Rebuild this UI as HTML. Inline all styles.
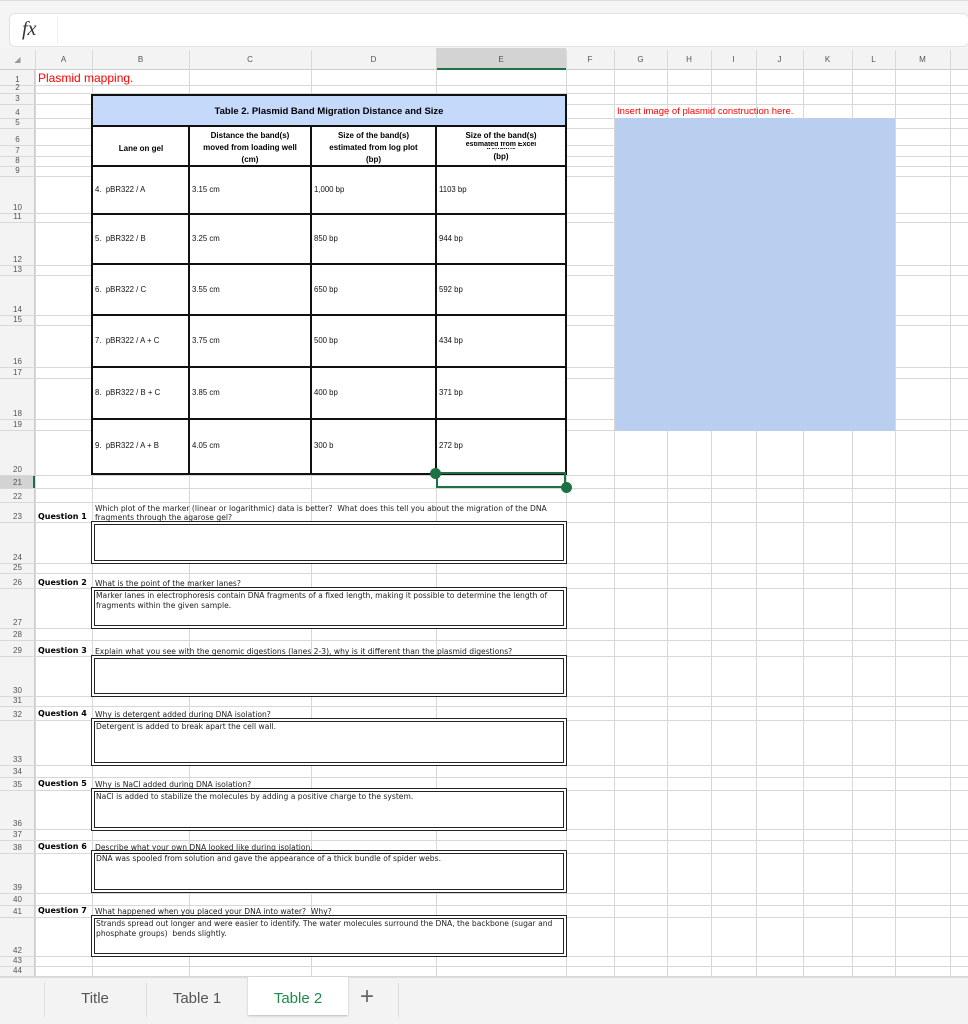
<!DOCTYPE html>
<html><head><meta charset="utf-8"><style>
*{margin:0;padding:0;box-sizing:border-box}
body{width:968px;height:1024px;overflow:hidden;background:#fff;font-family:"Liberation Sans",sans-serif;position:relative}
.a{position:absolute}
.hl{position:absolute;height:1px;background:#d8d8d8}
.vl{position:absolute;width:1px;background:#d8d8d8}
.ch{position:absolute;top:50px;height:20px;font-size:8px;color:#555;text-align:center;line-height:20px}
.rn{position:absolute;left:0;width:35px;font-size:8px;color:#555;text-align:center}
.t{position:absolute;font-size:8px;color:#111;white-space:nowrap}
.q{position:absolute;left:38px;font-size:8px;font-weight:bold;font-family:"DejaVu Sans",sans-serif}
.qt{position:absolute;left:95px;font-size:7.6px;font-family:"DejaVu Sans",sans-serif;color:#222;white-space:nowrap}
.box{position:absolute;left:91px;width:476px;border:4px double #222;background:#fff;font-size:7.6px;font-family:"DejaVu Sans",sans-serif;color:#222;padding:0 1px;line-height:10px}
.th{position:absolute;font-size:8px;font-weight:bold;text-align:center;line-height:12px}
</style></head><body>
<div class="a" style="left:0;top:0;width:968px;height:48px;background:#f5f5f5;border-top:1px solid #ddd"></div>
<div class="a" style="left:9px;top:13px;width:960px;height:34px;background:#fff;border:1px solid #e2e2e2;border-radius:6px"></div>
<div class="a" style="left:22px;top:18px;font-family:'Liberation Serif',serif;font-style:italic;font-size:20px;color:#333">fx</div>
<div class="a" style="left:57px;top:16px;width:1px;height:28px;background:#eee"></div>
<div class="a" style="left:0;top:48px;width:968px;height:22px;background:#f3f3f3;border-bottom:1px solid #ccc"></div>
<div class="a" style="left:436px;top:48px;width:130px;height:22px;background:#d3d3d3;border-bottom:2px solid #1e7145"></div>
<div class="a" style="left:0;top:70px;width:35px;height:906px;background:#f3f3f3;border-right:1px solid #ccc"></div>
<div class="a" style="left:0;top:475px;width:35px;height:13px;background:#d3d3d3;border-right:2px solid #1e7145"></div>
<div id="g"></div>
<div class="a" style="left:38px;top:71px;font-size:12px;color:#f00">Plasmid mapping.</div>
<div class="a" style="left:617px;top:106px;font-size:9.5px;color:#f00">Insert image of plasmid construction here.</div>
<div class="a" style="left:615px;top:118px;width:280px;height:313px;background:#bacff0"></div>
<!-- table -->
<div class="a" style="left:91px;top:94px;width:476px;height:381px;border:2px solid #111;background:#fff"></div>
<div class="a" style="left:93px;top:96px;width:472px;height:31px;background:#c5d9fb;border-bottom:2px solid #111;font-size:9.5px;font-weight:bold;text-align:center;line-height:31px">Table 2. Plasmid Band Migration Distance and Size</div>
<div id="tb"></div>
<div class="th" style="left:93px;top:143px;width:96px">Lane on gel</div>
<div class="th" style="left:189px;top:130px;width:122px">Distance the band(s)<br>moved from loading well<br>(cm)</div>
<div class="th" style="left:311px;top:130px;width:125px">Size of the band(s)<br>estimated from log plot<br>(bp)</div>
<div class="th" style="left:436px;top:130px;width:130px;height:36px;overflow:hidden">Size of the band(s)<br><span style="font-size:7px;line-height:6px;display:block;height:6px;overflow:hidden">estimated from Excel</span><span style="font-size:7px;display:block;height:3px;overflow:hidden;line-height:0">trendline</span>(bp)</div>
<div class="a" style="left:436px;top:472px;width:130px;height:16px;border:2px solid #1e7145;border-top-width:2px"></div>
<div class="a" style="left:430px;top:468px;width:11px;height:11px;border-radius:50%;background:#1e7145"></div>
<div class="a" style="left:561px;top:482px;width:11px;height:11px;border-radius:50%;background:#1e7145"></div>
<!-- questions -->
<div class="q" style="top:512px">Question 1</div>
<div class="qt" style="top:504px;line-height:9px">Which plot of the marker (linear or logarithmic) data is better?&nbsp; What does this tell you about the migration of the DNA<br>fragments through the agarose gel?</div>
<div class="box" style="top:521px;height:43px"></div>
<div class="q" style="top:578px">Question 2</div>
<div class="qt" style="top:579px">What is the point of the marker lanes?</div>
<div class="box" style="top:587px;height:42px">Marker lanes in electrophoresis contain DNA fragments of a fixed length, making it possible to determine the length of<br>fragments within the given sample.</div>
<div class="q" style="top:646px">Question 3</div>
<div class="qt" style="top:647px">Explain what you see with the genomic digestions (lanes 2-3), why is it different than the plasmid digestions?</div>
<div class="box" style="top:655px;height:42px"></div>
<div class="q" style="top:709px">Question 4</div>
<div class="qt" style="top:710px">Why is detergent added during DNA isolation?</div>
<div class="box" style="top:718px;height:48px">Detergent is added to break apart the cell wall.</div>
<div class="q" style="top:779px">Question 5</div>
<div class="qt" style="top:780px">Why is NaCl added during DNA isolation?</div>
<div class="box" style="top:788px;height:43px">NaCl is added to stabilize the molecules by adding a positive charge to the system.</div>
<div class="q" style="top:842px">Question 6</div>
<div class="qt" style="top:843px">Describe what your own DNA looked like during isolation.</div>
<div class="box" style="top:850px;height:43px">DNA was spooled from solution and gave the appearance of a thick bundle of spider webs.</div>
<div class="q" style="top:906px">Question 7</div>
<div class="qt" style="top:907px">What happened when you placed your DNA into water?&nbsp; Why?</div>
<div class="box" style="top:915px;height:42px">Strands spread out longer and were easier to identify. The water molecules surround the DNA, the backbone (sugar and<br>phosphate groups)&nbsp; bends slightly.</div>
<!-- tabs -->
<div class="a" style="left:0;top:977px;width:968px;height:47px;background:#f3f3f3;border-top:1px solid #ddd"></div>
<div class="a" style="left:44px;top:983px;width:1px;height:34px;background:#ddd"></div>
<div class="a" style="left:146px;top:983px;width:1px;height:34px;background:#ddd"></div>
<div class="a" style="left:398px;top:983px;width:1px;height:34px;background:#ddd"></div>
<div class="a" style="left:45px;top:990px;width:100px;text-align:center;font-size:15px;color:#555">Title</div>
<div class="a" style="left:147px;top:990px;width:100px;text-align:center;font-size:15px;color:#555">Table 1</div>
<div class="a" style="left:248px;top:977px;width:100px;height:38px;background:#fff;box-shadow:0 1px 2px #bbb"></div>
<div class="a" style="left:248px;top:990px;width:100px;text-align:center;font-size:15px;color:#1e8a4c">Table 2</div>
<div class="a" style="left:360px;top:983px;font-size:24px;color:#666;font-weight:300">+</div>
<script>
var cols=[35,92,189,311,436,566,614,667,711,756,803,852,895,950];
var names="ABCDEFGHIJKLM";
var rows=[70,85,93,104,118,128,145,156,166,176,213,222,265,275,315,325,367,378,419,430,475,488,502,522,563,573,588,628,640,656,696,706,720,765,777,790,829,840,853,893,905,917,956,966,976];
var h='';
for(var i=0;i<cols.length;i++){h+='<div class="vl" style="left:'+cols[i]+'px;top:50px;height:926px"></div>';}
for(var i=0;i<cols.length-1;i++){h+='<div class="ch" style="left:'+cols[i]+'px;width:'+(cols[i+1]-cols[i])+'px">'+names[i]+'</div>';}
h+='<div class="ch" style="left:0;width:35px;color:#999">&#9698;</div>';
for(var i=1;i<rows.length;i++){h+='<div class="hl" style="left:0;width:968px;top:'+rows[i]+'px"></div>';
h+='<div class="rn" style="top:'+(rows[i]-10)+'px">'+i+'</div>';}
document.getElementById('g').innerHTML=h;
var tr=[127,166,214,264,315,367,419,472];
var d=[["4.&nbsp; pBR322 / A","3.15 cm","1,000 bp","1103 bp"],["5.&nbsp; pBR322 / B","3.25 cm","850 bp","944 bp"],["6.&nbsp; pBR322 / C","3.55 cm","650 bp","592 bp"],["7.&nbsp; pBR322 / A + C","3.75 cm","500 bp","434 bp"],["8.&nbsp; pBR322 / B + C","3.85 cm","400 bp","371 bp"],["9.&nbsp; pBR322 / A + B","4.05 cm","300 b","272 bp"]];
var t='';
for(var i=1;i<tr.length-1;i++){t+='<div class="a" style="left:93px;width:472px;height:2px;background:#111;top:'+(tr[i]-1)+'px"></div>';}
[189,311,436].forEach(function(x){t+='<div class="a" style="left:'+(x-1)+'px;width:2px;background:#111;top:127px;height:346px"></div>';});
var cx=[95,192,314,439];
for(var r=0;r<6;r++){var mid=(tr[r+1]+tr[r+2])/2;for(var c=0;c<4;c++){t+='<div class="t" style="font-size:7.8px;left:'+cx[c]+'px;top:'+(mid-5)+'px">'+d[r][c]+'</div>';}}
document.getElementById('tb').innerHTML=t;
</script>
</body></html>
